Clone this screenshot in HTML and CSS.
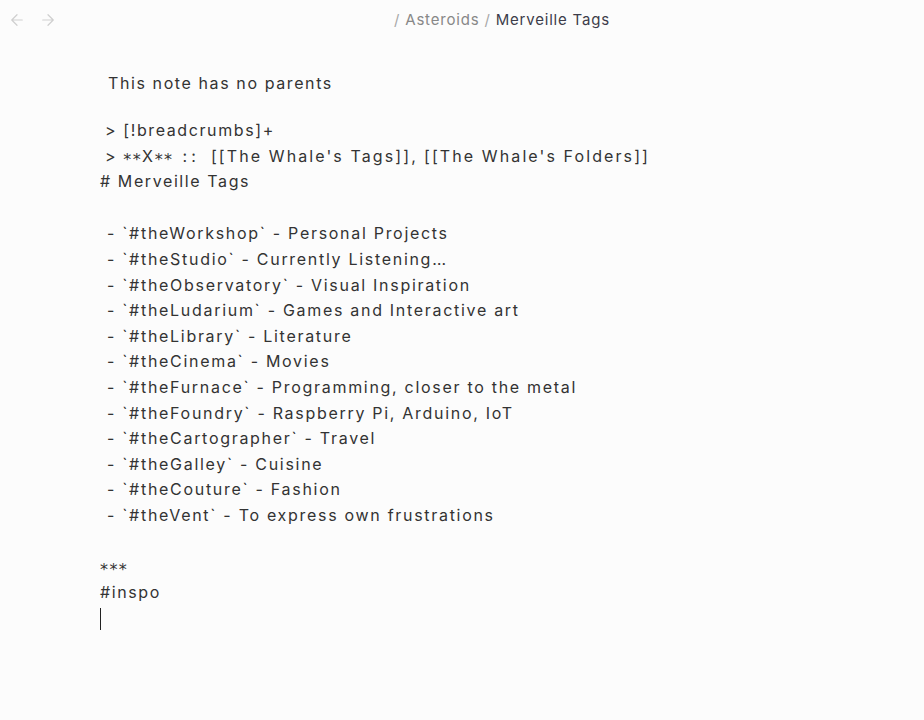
FILE: index.html
```html
<!DOCTYPE html>
<html>
<head>
<meta charset="utf-8">
<link rel="stylesheet" href="styles.css">
</head>
<body>
<header class="topbar">
  <div class="nav">
    <svg class="nav-icon" viewBox="0 0 24 24" width="18" height="18"><path d="M19 12H5M12 19l-7-7 7-7"/></svg>
    <svg class="nav-icon" viewBox="0 0 24 24" width="18" height="18"><path d="M5 12h14M12 5l7 7-7 7"/></svg>
  </div>
  <div class="crumbs"><span class="sep">/</span> <span class="folder">Asteroids</span> <span class="sep">/</span> <span class="title">Merveille Tags</span></div>
</header>
<main class="editor">
  <div class="parents">This note has no parents</div>
  <div class="source">
    <div class="line quote">&gt; [!breadcrumbs]+</div>
    <div class="line quote">&gt; <span class="ast">**</span>X<span class="ast">**</span> <span class="wide">::</span> <span class="link">[[The Whale's Tags]],</span> <span class="link">[[The Whale's Folders]]</span></div>
    <div class="line">#&nbsp;Merveille Tags</div>
    <div class="line blank"></div>
    <div class="line item">- `#theWorkshop` - Personal Projects</div>
    <div class="line item">- `#theStudio` - Currently Listening…</div>
    <div class="line item">- `#theObservatory` - Visual Inspiration</div>
    <div class="line item">- `#theLudarium` - Games and Interactive art</div>
    <div class="line item">- `#theLibrary` - Literature</div>
    <div class="line item">- `#theCinema` - Movies</div>
    <div class="line item">- `#theFurnace` - Programming, closer to the metal</div>
    <div class="line item">- `#theFoundry` - Raspberry Pi, Arduino, IoT</div>
    <div class="line item">- `#theCartographer` - Travel</div>
    <div class="line item">- `#theGalley` - Cuisine</div>
    <div class="line item">- `#theCouture` - Fashion</div>
    <div class="line item">- `#theVent` - To express own frustrations</div>
    <div class="line blank"></div>
    <div class="line"><span class="ast">***</span></div>
    <div class="line">#inspo</div>
    <div class="line"><span class="cursor"></span></div>
  </div>
</main>
</body>
</html>
```
FILE: styles.css
```css
html, body {
  margin: 0;
  padding: 0;
  background: #fcfcfc;
}
body {
  font-family: Inter, "Noto Sans", sans-serif;
  color: #333;
  width: 924px;
  height: 720px;
  overflow: hidden;
}
.topbar {
  height: 40px;
  display: flex;
  align-items: center;
  position: relative;
}
.nav {
  display: flex;
  gap: 13px;
  padding-left: 8px;
}
.nav-icon {
  fill: none;
  stroke: #cfcfcf;
  stroke-width: 1.6;
  stroke-linecap: round;
  stroke-linejoin: round;
}
.crumbs {
  position: absolute;
  left: 394px;
  top: 10px;
  font-size: 15px;
  letter-spacing: 0.8px;
  white-space: nowrap;
}
.sep { color: #a8a8a8; }
.folder { color: #888; }
.title { color: #3d3d4a; }
.editor {
  padding-left: 100px;
  padding-top: 30px;
  font-size: 16px;
  letter-spacing: 1.6px;
}
.parents {
  padding-left: 8px;
  line-height: 26px;
}
.source {
  margin-top: 22px;
}
.line {
  height: 25.6px;
  line-height: 25.6px;
  white-space: pre;
}
.line:nth-child(n+4) {
  position: relative;
  top: 1px;
}
.quote { padding-left: 5px; }
.item { padding-left: 7px; letter-spacing: 1.7px; }
.ast {
  font-family: "DejaVu Sans", sans-serif;
  font-size: 16px;
  letter-spacing: 1.4px;
  position: relative;
  top: 3px;
}
.wide { letter-spacing: 4px; padding-left: 3px; padding-right: 5px; }
.link { letter-spacing: 2.1px; }
.cursor {
  display: inline-block;
  width: 1px;
  height: 22px;
  background: #222;
  vertical-align: middle;
}
```
